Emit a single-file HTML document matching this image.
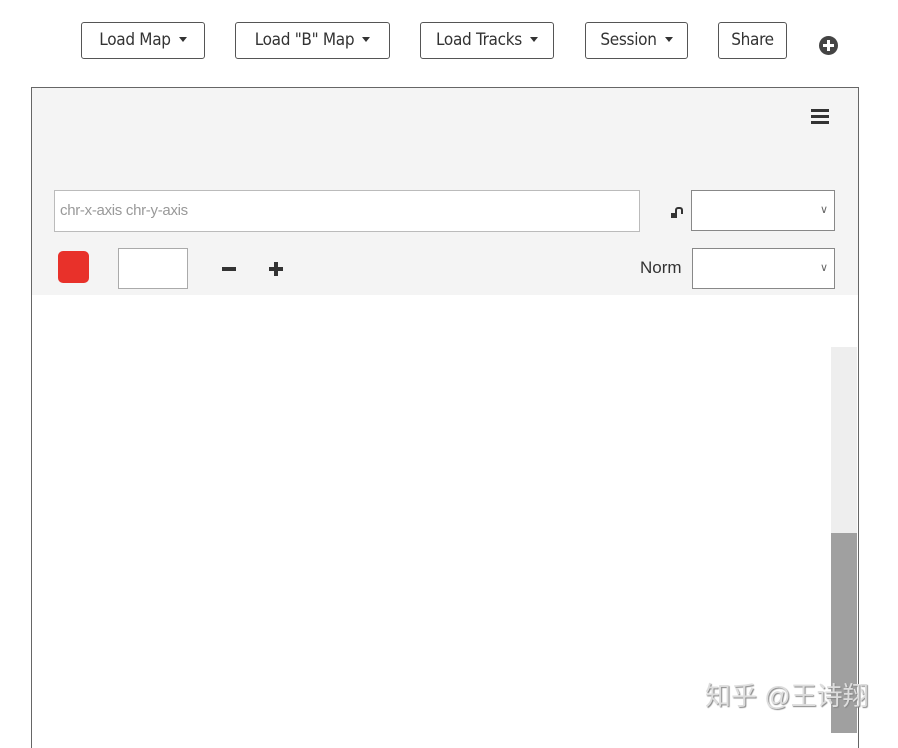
<!DOCTYPE html>
<html><head><style>
body{margin:0;width:898px;height:732px;background:#fff;position:relative;overflow:hidden;font-family:"Liberation Sans",sans-serif}
.b{position:absolute;top:22px;height:35px;border:1px solid #555;border-radius:3px;font-size:17px;color:#333;line-height:35px;text-align:center;box-sizing:content-box;font-family:"DejaVu Sans Condensed","Liberation Sans",sans-serif;letter-spacing:-0.3px}
.c:after{content:"";display:inline-block;margin-left:8px;vertical-align:3px;border-left:4px solid transparent;border-right:4px solid transparent;border-top:5px solid #333}
.a{position:absolute}
</style></head><body>
<div class="b c" style="left:81px;width:122px">Load Map</div>
<div class="b c" style="left:235px;width:153px">Load "B" Map</div>
<div class="b c" style="left:420px;width:132px">Load Tracks</div>
<div class="b c" style="left:585px;width:101px">Session</div>
<div class="b" style="left:718px;width:67px">Share</div>
<div class="a" style="left:819px;top:36px;width:19px;height:19px;border-radius:50%;background:#444"></div>
<div class="a" style="left:827px;top:40px;width:3px;height:11px;background:#fff"></div>
<div class="a" style="left:823px;top:44px;width:11px;height:3px;background:#fff"></div>
<div class="a" style="left:31px;top:87px;width:826px;height:660px;border:1px solid #666;border-bottom:none"></div>
<div class="a" style="left:32px;top:88px;width:826px;height:207px;background:#f4f4f4"></div>
<div class="a" style="left:811px;top:109px;width:18px;height:3px;background:#333;box-shadow:0 6px 0 #333,0 12px 0 #333"></div>
<div class="a" style="left:54px;top:190px;border:1px solid #bbb;background:#fff;font-size:15px;color:#999;line-height:40px;padding-left:5px;box-sizing:border-box;width:586px;height:42px;letter-spacing:-0.3px">chr-x-axis chr-y-axis</div>
<div class="a" style="left:671px;top:213px;width:6px;height:5px;background:#333"></div>
<div class="a" style="left:675px;top:207px;width:4px;height:5px;border:2px solid #333;border-bottom:none;border-radius:3px 3px 0 0"></div>
<div class="a" style="left:691px;top:190px;width:144px;height:41px;border:1px solid #888;background:#fff;box-sizing:border-box;font-size:11px;color:#666;text-align:right;padding-right:6px;line-height:39px">&#x2228;</div>
<div class="a" style="left:58px;top:251px;width:31px;height:32px;background:#e8312a;border-radius:5px"></div>
<div class="a" style="left:118px;top:248px;width:70px;height:41px;border:1px solid #aaa;background:#fff;box-sizing:border-box"></div>
<div class="a" style="left:222px;top:267px;width:14px;height:4px;background:#333"></div>
<div class="a" style="left:269px;top:267px;width:14px;height:4px;background:#333"></div>
<div class="a" style="left:274px;top:262px;width:4px;height:14px;background:#333"></div>
<div class="a" style="left:640px;top:258px;font-size:17px;color:#333">Norm</div>
<div class="a" style="left:692px;top:248px;width:143px;height:41px;border:1px solid #888;background:#fff;box-sizing:border-box;font-size:11px;color:#666;text-align:right;padding-right:6px;line-height:39px">&#x2228;</div>
<div class="a" style="left:831px;top:347px;width:26px;height:186px;background:#eee"></div>
<div class="a" style="left:831px;top:533px;width:26px;height:200px;background:#a0a0a0"></div>
<div class="a" style="left:705px;top:676px;font-size:26px;color:#ddd;font-family:'Liberation Sans','Noto Sans CJK SC',sans-serif;text-shadow:1px 1px 1px #888">知乎 @王诗翔</div>
</body></html>
